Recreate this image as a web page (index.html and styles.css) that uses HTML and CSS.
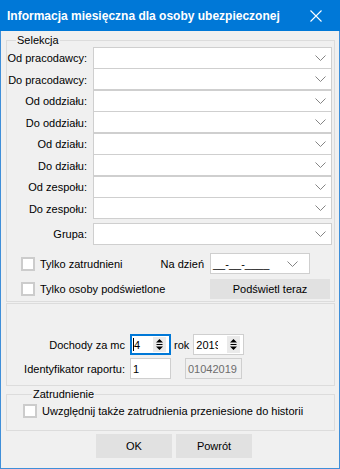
FILE: index.html
```html
<!DOCTYPE html>
<html lang="pl">
<head>
<meta charset="UTF-8">
<title>Informacja miesięczna dla osoby ubezpieczonej</title>
<link rel="stylesheet" href="styles.css">
</head>
<body>

<div class="window">
    <div class="titlebar">
        <span class="title">Informacja miesięczna dla osoby ubezpieczonej</span>
        <svg class="close" width="12" height="12" viewBox="0 0 12 12"><path d="M0.5 0.5L11.5 11.5M11.5 0.5L0.5 11.5" stroke="#fff" stroke-width="1.1" fill="none"/></svg>
    </div>

    <div class="content">
        <fieldset class="group selekcja">
            <legend>Selekcja</legend>

            <div class="pair">
                <div class="field"><label>Od pracodawcy:</label><div class="combo"><svg width="11" height="6"><polyline points="0.5,0.5 5.5,5.5 10.5,0.5" stroke="#858585" fill="none"/></svg></div></div>
                <div class="field"><label>Do pracodawcy:</label><div class="combo"><svg width="11" height="6"><polyline points="0.5,0.5 5.5,5.5 10.5,0.5" stroke="#858585" fill="none"/></svg></div></div>
            </div>
            <div class="pair">
                <div class="field"><label>Od oddziału:</label><div class="combo"><svg width="11" height="6"><polyline points="0.5,0.5 5.5,5.5 10.5,0.5" stroke="#858585" fill="none"/></svg></div></div>
                <div class="field"><label>Do oddziału:</label><div class="combo"><svg width="11" height="6"><polyline points="0.5,0.5 5.5,5.5 10.5,0.5" stroke="#858585" fill="none"/></svg></div></div>
            </div>
            <div class="pair">
                <div class="field"><label>Od działu:</label><div class="combo"><svg width="11" height="6"><polyline points="0.5,0.5 5.5,5.5 10.5,0.5" stroke="#858585" fill="none"/></svg></div></div>
                <div class="field"><label>Do działu:</label><div class="combo"><svg width="11" height="6"><polyline points="0.5,0.5 5.5,5.5 10.5,0.5" stroke="#858585" fill="none"/></svg></div></div>
            </div>
            <div class="pair">
                <div class="field"><label>Od zespołu:</label><div class="combo"><svg width="11" height="6"><polyline points="0.5,0.5 5.5,5.5 10.5,0.5" stroke="#858585" fill="none"/></svg></div></div>
                <div class="field"><label>Do zespołu:</label><div class="combo"><svg width="11" height="6"><polyline points="0.5,0.5 5.5,5.5 10.5,0.5" stroke="#858585" fill="none"/></svg></div></div>
            </div>
            <div class="field grupa"><label>Grupa:</label><div class="combo"><svg width="11" height="6"><polyline points="0.5,0.5 5.5,5.5 10.5,0.5" stroke="#858585" fill="none"/></svg></div></div>

            <div class="opts">
                <div class="chk"><span class="box"></span>Tylko zatrudnieni</div>
                <div class="na-label">Na dzień</div>
                <div class="date"><span>__-__-____</span><svg width="11" height="6"><polyline points="0.5,0.5 5.5,5.5 10.5,0.5" stroke="#858585" fill="none"/></svg></div>

                <div class="chk wide"><span class="box"></span>Tylko osoby podświetlone</div>
                <button class="btn light">Podświetl teraz</button>
            </div>
        </fieldset>

        <fieldset class="group dochody">
            <div class="frow">
                <label>Dochody za mc</label>
                <div class="ctrls">
                    <div class="spin focus">
                        <span class="val"><span class="caret"></span>4</span>
                        <span class="arrows"><svg width="9" height="13" viewBox="0 0 9 13"><path d="M4.5 1L8 4.5H1Z M4.5 12L8 8.5H1Z" fill="#000"/><path d="M1.5 6.5H7.5" stroke="#000"/></svg></span>
                    </div>
                    <span class="rok">rok</span>
                    <div class="spin year">
                        <span class="val">2019</span>
                        <span class="arrows"><svg width="9" height="13" viewBox="0 0 9 13"><path d="M4.5 1L8 4.5H1Z M4.5 12L8 8.5H1Z" fill="#000"/><path d="M1.5 6.5H7.5" stroke="#000"/></svg></span>
                    </div>
                </div>
            </div>
            <div class="frow">
                <label>Identyfikator raportu:</label>
                <div class="ctrls">
                    <div class="edit">1</div>
                    <div class="edit disabled">01042019</div>
                </div>
            </div>
        </fieldset>

        <fieldset class="group zatr">
            <legend>Zatrudnienie</legend>
            <div class="chk"><span class="box"></span>Uwzględnij także zatrudnienia przeniesione do historii</div>
        </fieldset>

        <div class="buttons">
            <button class="btn">OK</button>
            <button class="btn">Powrót</button>
        </div>
    </div>
</div>

</body>
</html>
```

FILE: styles.css
```css
body {
    margin: 0;
    font-family: "Liberation Sans", Arial, sans-serif;
    font-size: 11px;
    color: #000;
}

.window {
    width: 340px;
    height: 469px;
    display: flex;
    flex-direction: column;
}

.titlebar {
    height: 31px;
    flex: none;
    background: #0078d7;
    color: #fff;
    display: flex;
    align-items: center;
    justify-content: space-between;
    padding: 0 18px 0 7px;
}

.title {
    font-weight: bold;
    font-size: 12px;
}

.content {
    flex: 1;
    background: #f0f0f0;
    border: 1px solid #3f8fd9;
    border-top: 0;
    padding: 0 4px 0 5px;
}

.group {
    margin: 0;
    padding: 0;
    border: 1px solid #dcdcdc;
    min-width: 0;
}

.group legend {
    margin-left: 9px;
    padding: 0 1px;
    line-height: 13px;
}

/* Selekcja */
.selekcja {
    margin-top: 3px;
    padding: 0 2px 2px 0;
}

.field {
    display: grid;
    grid-template-columns: 80px 1fr;
    column-gap: 6px;
    align-items: center;
}

.field label {
    text-align: right;
}

.combo {
    height: 22px;
    box-sizing: border-box;
    border: 1px solid #cfcfcf;
    background: #fff;
    display: flex;
    align-items: center;
    justify-content: flex-end;
    padding-right: 5px;
}

.pair .field + .field .combo {
    border-top: 0;
    height: 21px;
}

.grupa {
    margin-top: 4px;
}

.opts {
    display: grid;
    grid-template-columns: 1fr auto 120px;
    column-gap: 6px;
    row-gap: 5px;
    align-items: center;
    padding: 8px 2px 0 14px;
}

.chk {
    display: flex;
    align-items: center;
    gap: 5px;
    white-space: nowrap;
}

.chk.wide {
    grid-column: 1 / 3;
}

.box {
    width: 14px;
    height: 14px;
    box-sizing: border-box;
    border: 2px solid #cccccc;
    background: #fff;
    flex: none;
}

.na-label {
    text-align: right;
}

.date {
    width: 100px;
    height: 21px;
    box-sizing: border-box;
    border: 1px solid #cfcfcf;
    background: #fff;
    display: flex;
    align-items: center;
    justify-content: space-between;
    padding: 0 11px 0 2px;
}

.btn {
    width: 76px;
    height: 24px;
    border: 0;
    background: #e1e1e1;
    font: inherit;
    color: #000;
    padding: 0;
}

.btn.light {
    width: 120px;
    height: 20px;
}

/* Dochody */
.dochody {
    margin-top: 1px;
    padding: 30px 0 6px 0;
}

.frow {
    display: grid;
    grid-template-columns: 118px auto;
    column-gap: 5px;
    align-items: center;
}

.frow + .frow {
    margin-top: 3px;
}

.frow label {
    text-align: right;
}

.ctrls {
    display: flex;
    align-items: center;
}

.spin, .edit {
    height: 21px;
    box-sizing: border-box;
    border: 1px solid #cfcfcf;
    background: #fff;
    display: flex;
    align-items: center;
    padding-left: 2px;
}

.spin {
    width: 41px;
}

.spin.focus {
    border: 2px solid #0078d7;
    padding-left: 1px;
}

.spin.year {
    width: 51px;
    margin-left: 4px;
}

.spin .val {
    flex: 1;
    overflow: hidden;
    white-space: nowrap;
    display: flex;
    align-items: center;
}

.spin.year .val {
    flex: none;
    width: 22px;
    margin-right: 9px;
}

.caret {
    width: 1px;
    height: 13px;
    background: #000;
    margin-right: 0;
}

.arrows {
    width: 13px;
    align-self: stretch;
    background: #eaeaea;
    margin: 1px 3px 1px 0;
    display: flex;
    align-items: center;
    justify-content: center;
}

.rok {
    margin-left: 3px;
}

.edit {
    width: 41px;
}

.edit.disabled {
    width: 57px;
    margin-left: 14px;
    background: #f0f0f0;
    color: #6d6d6d;
}

/* Zatrudnienie */
.zatr {
    margin-top: 2px;
    padding: 3px 0 12px 16px;
}

.buttons {
    display: flex;
    justify-content: center;
    gap: 4px;
    margin-top: 3px;
    padding-left: 7px;
}
```
